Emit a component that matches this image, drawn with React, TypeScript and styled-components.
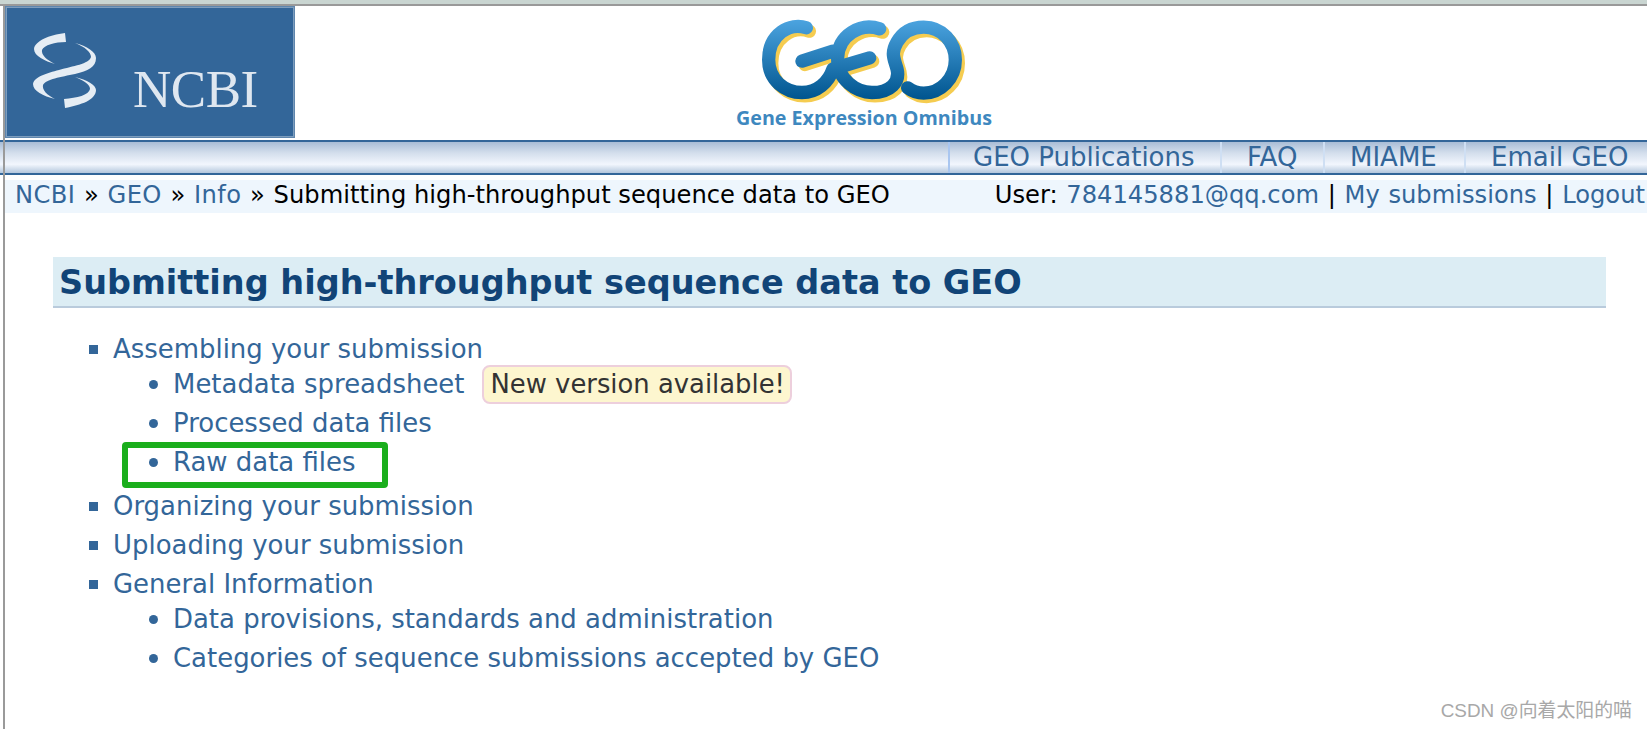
import React from "react";
import styled, { createGlobalStyle } from "styled-components";

const Global = createGlobalStyle`
  html, body { margin: 0; padding: 0; background: #fff; }
  body { font-family: "DejaVu Sans", Verdana, sans-serif; color: #000; }
`;

const Page = styled.div`
  position: relative;
  width: 1647px;
  height: 729px;
  overflow: hidden;
  background: #fff;
`;
const TopStrip = styled.div`
  height: 4px;
  background: #c9d5d1;
  border-bottom: 2px solid #999;
`;
const LeftLine = styled.div`
  position: absolute;
  left: 3px;
  top: 4px;
  bottom: 0;
  width: 2px;
  background: #9a9a9a;
`;
const Header = styled.header`
  display: flex;
  height: 132px;
  padding-left: 5px;
  margin-bottom: 2px;
`;
const NcbiLogo = styled.div`
  box-sizing: border-box;
  width: 290px;
  height: 132px;
  display: flex;
  align-items: flex-start;
  background: #336699;
  border: 2px solid #7d9dbd;
  outline: 1px solid #5f86ad;
  outline-offset: -1px;
  padding: 25px 0 0 26px;
`;
const NcbiWord = styled.span`
  font-family: "Liberation Serif", serif;
  font-size: 53px;
  line-height: 54px;
  color: #dfe7f0;
  margin: 29px 0 0 34px;
  letter-spacing: -0.5px;
`;
const GeoLogo = styled.div`
  display: flex;
  flex-direction: column;
  align-items: center;
  margin-left: 439px;
  width: 256px;
  padding-top: 11px;
`;
const GeoTag = styled.span`
  font-family: "Open Sans", sans-serif;
  font-weight: 700;
  font-size: 19.7px;
  line-height: 20px;
  white-space: nowrap;
  color: #3e88bf;
  margin: 4px 0 0 4px;
`;
const NavBar = styled.nav`
  box-sizing: border-box;
  display: flex;
  justify-content: flex-end;
  height: 35px;
  border-top: 2px solid #336699;
  border-bottom: 2px solid #336699;
  background: linear-gradient(#a9bdd6 0%, #d3deec 35%, #f2f6fd 72%, #b4c7dd 100%);
  margin-bottom: 5px;
`;
const NavItem = styled.a<{ $w: number }>`
  box-sizing: border-box;
  width: ${(p) => p.$w}px;
  padding-left: ${(p) => (p.$w > 200 ? 23 : 25)}px;
  border-left: 2px solid ${(p) => (p.$w > 200 ? "#a9c6f0" : "#cfdff3")};
  font-size: 26px;
  line-height: 31px;
  color: #336699;
  white-space: nowrap;
`;
const Crumbs = styled.div`
  box-sizing: border-box;
  display: flex;
  justify-content: space-between;
  height: 33px;
  margin-left: 5px;
  padding: 0 2px 0 10px;
  background: #eef6fd;
  font-size: 24.2px;
  line-height: 30px;
  white-space: nowrap;
`;
const CrumbLink = styled.a`
  color: #336699;
`;
const TrailLink = styled(CrumbLink)`
  letter-spacing: 0.4px;
`;
const TrailSep = styled.span`
  margin: 0 1px;
`;
const UserBox = styled.span`
  word-spacing: 1px;
`;
const Main = styled.main`
  padding: 44px 41px 0 53px;
`;
const Title = styled.h1`
  margin: 0 0 22px;
  box-sizing: border-box;
  height: 51px;
  padding-left: 6px;
  background: #dcedf4;
  border-bottom: 2px solid #b9cbdc;
  font-size: 33.5px;
  line-height: 51px;
  font-weight: 700;
  color: #114477;
  white-space: nowrap;
`;
const TopList = styled.ul`
  list-style: none;
  margin: 0;
  padding: 0 0 0 36px;
`;
const TopItem = styled.li`
  position: relative;
  padding-left: 24px;
  font-size: 25.95px;
  line-height: 39px;
  color: #336699;
  &::before {
    content: "";
    position: absolute;
    left: 0;
    top: 15px;
    width: 9px;
    height: 9px;
    background: #336699;
  }
`;
const SubList = styled.ul`
  list-style: none;
  margin: -4px 0 5px;
  padding: 0 0 0 36px;
`;
const SubItem = styled.li`
  position: relative;
  padding-left: 24px;
  height: 39px;
  line-height: 39px;
  color: #336699;
  &::before {
    content: "";
    position: absolute;
    left: 0;
    top: 15px;
    width: 9px;
    height: 9px;
    border-radius: 50%;
    background: #336699;
  }
`;
const Badge = styled.span`
  display: inline-block;
  box-sizing: border-box;
  height: 39px;
  margin-left: 17px;
  padding: 0 5px 0 7px;
  line-height: 35px;
  vertical-align: top;
  background: #fdf6cf;
  border: 2px solid #edcfdc;
  border-radius: 8px;
  color: #333;
  font-size: 25.85px;
`;
const Highlight = styled.div`
  position: absolute;
  left: -27px;
  top: -1px;
  width: 266px;
  height: 46px;
  box-sizing: border-box;
  border: 6px solid #1aae1c;
  border-radius: 4px;
`;
const Watermark = styled.div`
  position: absolute;
  right: 15px;
  bottom: 6px;
  font-family: "Liberation Sans", "Noto Sans CJK SC", sans-serif;
  font-size: 18.9px;
  line-height: 24px;
  color: #a8a8a8;
`;

const Helix = () => (
  <svg width="66" height="76" viewBox="0 0 66 76" style={{ flex: "none" }}>
    <g fill="#e6edf4">
      <path d="M32 0 C16 2 2 8 1 16 C1 23 12 28 22 31 C14 27 8 22 9 17 C11 12 22 9 33 9 Z" />
      <path d="M42 10 C52 14 58 19 58 24 C56 31 40 33 26 37 C14 40 1 44 0 51 C0 58 10 63 22 66 C14 62 9 57 10 52 C13 46 28 44 42 41 C55 38 63 34 63 25 C63 19 54 13 42 10 Z" />
      <path d="M42 44 C52 48 57 52 57 56 C56 62 44 65 31 66 L32 75 C48 72 63 67 63 57 C63 52 54 47 42 44 Z" />
    </g>
  </svg>
);

const GeoMark = () => {
  const d = [
    "M318 82 C270 65 205 100 205 178 C205 240 255 276 305 276 C350 276 385 245 398 205",
    "M305 182 L398 152",
    "M538 85 C480 65 415 105 412 170 C410 240 470 276 515 276 C570 276 600 245 590 205 C582 175 570 160 590 125 C610 90 640 80 670 80 C725 80 765 125 765 178 C765 235 720 278 670 278 C650 278 635 272 622 262",
    "M432 195 L508 172",
  ];
  return (
    <svg width="210" height="87" viewBox="170 50 630 260" style={{ flex: "none" }}>
      <defs>
        <linearGradient id="geoBlue" gradientUnits="userSpaceOnUse" x1="0" y1="60" x2="0" y2="295">
          <stop offset="0" stopColor="#4ba3df" />
          <stop offset="1" stopColor="#00558f" />
        </linearGradient>
      </defs>
      <g fill="none" strokeLinecap="round" strokeWidth="40">
        <g stroke="#f5cc50" transform="translate(9 10)">
          {d.map((p) => (
            <path key={p} d={p} />
          ))}
        </g>
        <g stroke="url(#geoBlue)">
          {d.map((p) => (
            <path key={p} d={p} />
          ))}
        </g>
      </g>
    </svg>
  );
};

export default function App() {
  return (
    <Page>
      <Global />
      <TopStrip />
      <Header>
        <NcbiLogo>
          <Helix />
          <NcbiWord>NCBI</NcbiWord>
        </NcbiLogo>
        <GeoLogo>
          <GeoMark />
          <GeoTag>Gene Expression Omnibus</GeoTag>
        </GeoLogo>
      </Header>
      <NavBar>
        <NavItem $w={272}>GEO Publications</NavItem>
        <NavItem $w={103}>FAQ</NavItem>
        <NavItem $w={141}>MIAME</NavItem>
        <NavItem $w={183}>Email GEO</NavItem>
      </NavBar>
      <Crumbs>
        <span>
          <TrailLink>NCBI</TrailLink> <TrailSep>»</TrailSep> <TrailLink>GEO</TrailLink> <TrailSep>»</TrailSep> <TrailLink>Info</TrailLink> <TrailSep>»</TrailSep> Submitting high-throughput sequence data to GEO
        </span>
        <UserBox>
          User: <CrumbLink>784145881@qq.com</CrumbLink> | <CrumbLink>My submissions</CrumbLink> | <CrumbLink>Logout</CrumbLink>
        </UserBox>
      </Crumbs>
      <Main>
        <Title>Submitting high-throughput sequence data to GEO</Title>
        <TopList>
          <TopItem>
            Assembling your submission
            <SubList>
              <SubItem>
                Metadata spreadsheet
                <Badge>New version available!</Badge>
              </SubItem>
              <SubItem>Processed data files</SubItem>
              <SubItem>
                <Highlight />
                Raw data files
              </SubItem>
            </SubList>
          </TopItem>
          <TopItem>Organizing your submission</TopItem>
          <TopItem>Uploading your submission</TopItem>
          <TopItem>
            General Information
            <SubList>
              <SubItem>Data provisions, standards and administration</SubItem>
              <SubItem>Categories of sequence submissions accepted by GEO</SubItem>
            </SubList>
          </TopItem>
        </TopList>
      </Main>
      <LeftLine />
      <Watermark>CSDN @向着太阳的喵</Watermark>
    </Page>
  );
}
